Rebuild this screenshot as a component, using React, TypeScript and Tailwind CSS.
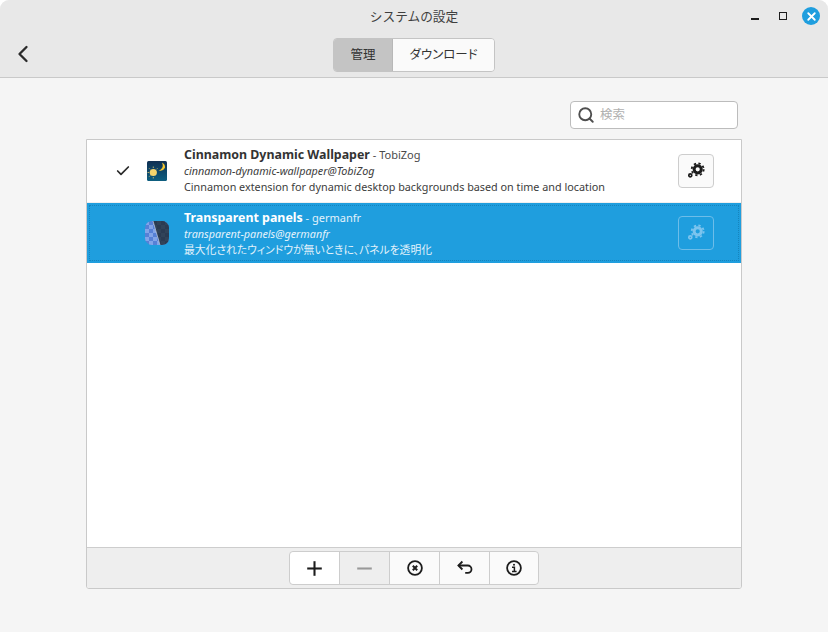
import type { ReactNode } from "react";
import { ChevronLeft, Minus, Plus, Search, X, Check } from "lucide-react";

const FONT = "font-['Noto_Sans','Noto_Sans_CJK_JP',sans-serif]";

function GearIcon({ className }: Readonly<{ className?: string }>) {
  return (
    <svg viewBox="0 0 20 20" width="20" height="20" className={className} fill="none" stroke="currentColor">
      <circle cx="11.7" cy="8.3" r="3.6" strokeWidth="3" />
      <circle cx="11.7" cy="8.3" r="6" strokeWidth="1.8" strokeDasharray="2.3 2.41" />
      <circle cx="4.3" cy="14.3" r="1.5" strokeWidth="1.7" />
    </svg>
  );
}

function WallpaperIcon() {
  return (
    <svg viewBox="0 0 20 20" width="20" height="20">
      <defs>
        <linearGradient id="wallpaper-sky" x1="0" y1="0" x2="0" y2="1">
          <stop offset="0" stopColor="#0f2f52" />
          <stop offset="1" stopColor="#0e5f80" />
        </linearGradient>
      </defs>
      <rect x="0" y="0" width="20" height="20" rx="1.5" fill="url(#wallpaper-sky)" />
      <circle cx="6.3" cy="11.5" r="3.6" fill="#f7d56c" />
      <g stroke="#f7d56c" strokeWidth="0.8">
        <path d="M6.3 5.6v1.3M.6 11.5h1.3M2.2 7.4l.9.9M10.4 7.4l-.9.9M2.2 15.6l.9-.9M6.3 16.1v1.3" />
      </g>
      <path d="M14.8 1.5a5 5 0 0 1-3.4 7.9 5.4 5.4 0 0 0 6.6-2.6 5.2 5.2 0 0 0-3.2-5.3z" fill="#f6c832" />
    </svg>
  );
}

function PanelsIcon() {
  const light = [];
  const dark = [];
  for (let y = 0; y < 24; y += 4) {
    for (let x = 0; x < 24; x += 4) {
      if ((x + y) % 8 === 0) {
        light.push(<rect key={`l-${x}-${y}`} x={x} y={y} width="4" height="4" fill="#82a4e8" />);
        dark.push(<rect key={`d-${x}-${y}`} x={x} y={y} width="4" height="4" fill="#2b3b52" />);
      }
    }
  }
  return (
    <svg viewBox="0 0 24 24" width="24" height="24">
      <defs>
        <clipPath id="panel-shape">
          <rect x="0" y="0" width="24" height="24" rx="7" />
        </clipPath>
        <clipPath id="panel-dark">
          <path d="M8 0H24V24H15Z" />
        </clipPath>
      </defs>
      <g clipPath="url(#panel-shape)">
        <rect width="24" height="24" fill="#5680d6" />
        {light}
        <g clipPath="url(#panel-dark)">
          <rect width="24" height="24" fill="#314359" />
          {dark}
        </g>
        <path d="M8 0L15 24" stroke="#c9d6ee" strokeWidth="0.7" />
      </g>
    </svg>
  );
}

function ToolButton({ children, disabled, first, last }: Readonly<{ children: ReactNode; disabled?: boolean; first?: boolean; last?: boolean }>) {
  return (
    <button
      type="button"
      className={`flex h-full items-center justify-center border-[#cdcdcd] ${last ? "w-[48px]" : "w-[50px]"} ${disabled ? "bg-[#eeeeee] text-[#999999]" : first ? "bg-white text-[#1c1c1c]" : "bg-[#fafafa] text-[#1c1c1c]"} ${first ? "rounded-l-[4px]" : ""} ${last ? "rounded-r-[4px]" : "border-r"}`}
    >
      {children}
    </button>
  );
}

function ExtensionRow({
  name,
  author,
  uuid,
  description,
  icon,
  checked,
  selected,
}: Readonly<{
  name: string;
  author: string;
  uuid: string;
  description: string;
  icon: ReactNode;
  checked?: boolean;
  selected?: boolean;
}>) {
  return (
    <div
      className={`flex items-center ${selected ? "relative h-[60px] bg-[#1f9ede] text-white" : "h-[63px] border-b border-[#f0f0f0] bg-white text-[#3c3c3c]"}`}
    >
      {selected && <div className="pointer-events-none absolute inset-[2px] border border-dotted border-[#1684bd]" />}
      <div className="flex w-[56px] shrink-0 items-center justify-end pr-[12px]">
        {checked && <Check size={16} strokeWidth={2.6} className="text-[#2b2b2b]" />}
      </div>
      <div className="flex w-[28px] shrink-0 items-center justify-center">{icon}</div>
      <div className={`ml-[13px] min-w-0 flex-1 ${selected ? "mt-[2px]" : ""}`}>
        <div className="h-[16px] text-[12.4px] leading-[16px]">
          <span className={`font-bold ${selected ? "text-white" : "text-[#333333]"}`}>{name}</span>
          <span className={`text-[11px] ${selected ? "text-[#e3f2fb]" : "text-[#4a4a4a]"}`}> - {author}</span>
        </div>
        <div className={`h-[16px] text-[10.8px] italic leading-[16px] ${selected ? "text-[#e3f2fb]" : "text-[#3c3c3c]"}`}>{uuid}</div>
        <div className={`h-[16px] text-[10.8px] leading-[16px] [font-feature-settings:'palt'] ${selected ? "text-[#e3f2fb]" : "text-[#3c3c3c]"}`}>{description}</div>
      </div>
      <button
        type="button"
        className={`mr-[27px] flex h-[34px] w-[36px] items-center justify-center rounded-[4px] border ${selected ? "border-[#6dbde9] text-[#7cc4ee]" : "border-[#cdcdcd] bg-[#fafafa] text-[#1c1c1c]"}`}
      >
        <GearIcon />
      </button>
    </div>
  );
}

export default function App() {
  return (
    <div className={`${FONT} flex h-[632px] w-[828px] flex-col overflow-hidden rounded-t-[9px] bg-[#f5f5f5] text-[#3c3c3c]`}>
      <header className="h-[78px] shrink-0 border-b border-[#c9c9c9] bg-[#e8e8e8]">
        <div className="relative h-[33px] pt-[8px] text-center text-[12.7px] leading-[17px] text-[#3f3f3f]">
          システムの設定
          <div className="absolute right-[8px] top-[7px] flex items-center">
            <span className="mt-[4px] h-[1.5px] w-[8px] translate-y-[1px] bg-[#1c1c1c]" />
            <span className="ml-[20px] h-[8px] w-[8px] border-[1.5px] border-[#1c1c1c]" />
            <span className="ml-[15px] flex h-[18px] w-[18px] items-center justify-center rounded-full bg-[#1f9ede]">
              <X size={13} strokeWidth={3.4} className="text-white" />
            </span>
          </div>
        </div>
        <div className="relative flex h-[44px] justify-center pt-[5px]">
          <ChevronLeft size={28} strokeWidth={2} className="absolute left-[9px] top-[7px] text-[#2b2b2b]" />
          <div className="flex h-[34px] w-[162px] overflow-hidden rounded-[4px] border border-[#c4c4c4] text-[12.5px]">
            <button type="button" className="w-[59px] border-r border-[#b8b8b8] bg-[#c4c4c4] text-[#333333]">管理</button>
            <button type="button" className="flex-1 bg-[#fafafa] text-[#333333] [font-feature-settings:'palt']">ダウンロード</button>
          </div>
        </div>
      </header>

      <main className="flex min-h-0 flex-1 flex-col px-[86px] pb-[43px] pt-[23px]">
        <div className="flex justify-end pr-[4px]">
          <div className="flex h-[28px] w-[168px] items-center gap-[5px] rounded-[4px] border border-[#bcbcbc] bg-white pl-[6px] text-[12.5px] text-[#b0b0b0]">
            <Search size={18} strokeWidth={2.5} className="text-[#4f4f4f]" />
            検索
          </div>
        </div>
        <div className="mt-[10px] flex min-h-0 flex-1 flex-col overflow-hidden rounded-b-[3px] border border-[#c9c9c9] bg-white">
          <div className="flex-1">
            <ExtensionRow
              name="Cinnamon Dynamic Wallpaper"
              author="TobiZog"
              uuid="cinnamon-dynamic-wallpaper@TobiZog"
              description="Cinnamon extension for dynamic desktop backgrounds based on time and location"
              icon={<WallpaperIcon />}
              checked
            />
            <ExtensionRow
              name="Transparent panels"
              author="germanfr"
              uuid="transparent-panels@germanfr"
              description="最大化されたウィンドウが無いときに、パネルを透明化"
              icon={<PanelsIcon />}
              selected
            />
          </div>
          <div className="flex h-[41px] shrink-0 items-center justify-center border-t border-[#cdcdcd] bg-[#eeeeee]">
            <div className="flex h-[34px] items-center rounded-[4px] border border-[#cdcdcd]">
              <ToolButton first><Plus size={25} strokeWidth={2} strokeLinecap="butt" /></ToolButton>
              <ToolButton disabled><Minus size={25} strokeWidth={2} strokeLinecap="butt" /></ToolButton>
              <ToolButton>
                <svg viewBox="0 0 16 16" width="16" height="16" fill="none" stroke="currentColor">
                  <circle cx="8" cy="8" r="6.9" strokeWidth="1.8" />
                  <path d="M5.8 5.8l4.4 4.4M10.2 5.8l-4.4 4.4" strokeWidth="2" />
                </svg>
              </ToolButton>
              <ToolButton>
                <svg viewBox="0 0 16 16" width="16" height="16" fill="none" stroke="currentColor" strokeWidth="1.8">
                  <path d="M5.4 1.5L1.4 5.5l4 4" />
                  <path d="M1.6 5.5H10.8a3.7 3.7 0 0 1 0 7.4H8.2" />
                </svg>
              </ToolButton>
              <ToolButton last>
                <svg viewBox="0 0 16 16" width="16" height="16" fill="none" stroke="currentColor">
                  <circle cx="8" cy="8" r="6.9" strokeWidth="1.8" />
                  <path d="M6 7.2h2.4V11.6M6 11.6h4.6" strokeWidth="1.5" />
                  <circle cx="8" cy="4.8" r="1" fill="currentColor" stroke="none" />
                </svg>
              </ToolButton>
            </div>
          </div>
        </div>
      </main>
    </div>
  );
}
